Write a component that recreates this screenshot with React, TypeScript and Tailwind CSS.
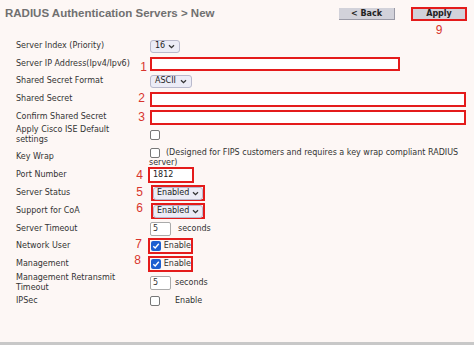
import React from "react";

function Chevron() {
  return (
    <svg width="7" height="5" viewBox="0 0 7 5" className="ml-auto shrink-0">
      <path d="M1 1.2 L3.5 3.7 L6 1.2" fill="none" stroke="#333" strokeWidth="1.3" />
    </svg>
  );
}

function Select({ value, width, tight = false }: { value: string; width: string; tight?: boolean }) {
  return (
    <div
      className={`flex items-center h-[13px] ${width} rounded-[3px] border border-[#b9b9cc] bg-[#ececf6] ${tight ? "pl-[3px] pr-[3px]" : "pl-[4px] pr-[4px]"} text-[8px] text-[#222]`}
    >
      <span>{value}</span>
      <Chevron />
    </div>
  );
}

function Box({ checked = false }: { checked?: boolean }) {
  if (checked) {
    return (
      <span className="flex items-center justify-center w-[10px] h-[10px] rounded-[2px] bg-[#1c5fd0]">
        <svg width="8" height="8" viewBox="0 0 8 8">
          <path d="M1.3 4.2 L3.2 6 L6.8 1.8" fill="none" stroke="#fff" strokeWidth="1.4" />
        </svg>
      </span>
    );
  }
  return <span className="block w-[10px] h-[10px] rounded-[2px] border border-[#777] bg-white" />;
}

// red annotation digits, laid over the form
function Mark({ n, className }: { n: string; className: string }) {
  return (
    <span
      className={`absolute w-[8px] text-right top-1/2 text-[12px] leading-none text-[#d8342c] font-['Liberation_Sans',sans-serif] ${className}`}
    >
      {n}
    </span>
  );
}

function Row({ label, h, children }: { label: React.ReactNode; h: string; children?: React.ReactNode }) {
  return (
    <div className={`flex items-center ${h}`}>
      <div className="w-[134px] shrink-0 leading-[10px]">{label}</div>
      <div className="relative flex items-center flex-1 h-full">{children}</div>
    </div>
  );
}

export default function App() {
  return (
    <div className="w-[474px] h-[345px] flex flex-col bg-[#fdf7f5] text-[8px] text-[#333] font-['DejaVu_Sans',sans-serif] overflow-hidden">
      <div className="flex items-start justify-between pl-[5px] pr-[7px] pt-[8px] h-[37px] shrink-0">
        <h1 className="text-[11.5px] font-bold text-[#707070] font-['Liberation_Sans',sans-serif] leading-none">
          RADIUS Authentication Servers &gt; New
        </h1>
        <div className="flex items-start gap-[16px] -mt-[1px]">
          <button className="mt-[1px] w-[56px] h-[12px] bg-[#d2d2da] border-b border-r border-[#9a9aa6] text-[8px] font-bold text-[#222] leading-none">
            &lt; Back
          </button>
          <div className="flex flex-col items-center">
            <button className="w-[56px] h-[14px] bg-[#d2d2da] border-2 border-[#e41b1b] text-[8px] font-bold text-[#222] leading-none">
              Apply
            </button>
            <span className="mt-[3px] text-[12px] leading-none text-[#d8342c] font-['Liberation_Sans',sans-serif]">9</span>
          </div>
        </div>
      </div>

      <div className="flex flex-col pl-[16px]">
        <Row label="Server Index (Priority)" h="h-[18px]">
          <Select value="16" width="w-[30px]" />
        </Row>
        <Row label="Server IP Address(Ipv4/Ipv6)" h="h-[17px]">
          <Mark n="1" className="-left-[11px] -translate-y-[3px]" />
          <div className="w-[250px] h-[14px] border-2 border-[#e41b1b] bg-white" />
        </Row>
        <Row label="Shared Secret Format" h="h-[18px]">
          <Select value="ASCII" width="w-[42px]" />
        </Row>
        <Row label="Shared Secret" h="h-[18px]">
          <Mark n="2" className="-left-[13px] -translate-y-[7px]" />
          <div className="w-[316px] h-[15px] border-2 border-[#e41b1b] bg-white" />
        </Row>
        <Row label="Confirm Shared Secret" h="h-[18px]">
          <Mark n="3" className="-left-[13px] -translate-y-[6px]" />
          <div className="w-[316px] h-[15px] border-2 border-[#e41b1b] bg-white" />
        </Row>
        <Row label={<>Apply Cisco ISE Default<br />settings</>} h="h-[18px]">
          <Box />
        </Row>
        <div className="flex h-[22px]">
          <div className="w-[134px] shrink-0 pt-[8px] leading-[10px]">Key Wrap</div>
          <div className="pt-[4px] leading-[10px]">
            <div className="flex items-center gap-[6px]">
              <Box />
              <span>(Designed for FIPS customers and requires a key wrap compliant RADIUS</span>
            </div>
            <div className="-ml-[1px]">server)</div>
          </div>
        </div>
        <Row label="Port Number" h="h-[18px]">
          <Mark n="4" className="-left-[15px] -translate-y-[6px]" />
          <div className="-ml-[2px] w-[46px] h-[16px] border-2 border-[#e41b1b] bg-white flex items-center pl-[3px] text-[#222]">
            1812
          </div>
        </Row>
        <Row label="Server Status" h="h-[18px]">
          <Mark n="5" className="-left-[15px] -translate-y-[7px]" />
          <div className="ml-[1px] w-[54px] h-[16px] border-2 border-[#e41b1b] flex items-center">
            <Select value="Enabled" width="w-full" tight />
          </div>
        </Row>
        <Row label="Support for CoA" h="h-[18px]">
          <Mark n="6" className="-left-[15px] -translate-y-[9px]" />
          <div className="ml-[1px] w-[54px] h-[16px] border-2 border-[#e41b1b] flex items-center">
            <Select value="Enabled" width="w-full" tight />
          </div>
        </Row>
        <Row label="Server Timeout" h="h-[17px]">
          <div className="w-[21px] h-[14px] border border-[#aaa] rounded-[2px] bg-white flex items-center pl-[2px]">5</div>
          <span className="ml-[7px]">seconds</span>
        </Row>
        <Row label="Network User" h="h-[18px]">
          <Mark n="7" className="-left-[16px] -translate-y-[8px]" />
          <div className="-ml-[2px] flex items-center gap-[3px] w-[45px] h-[16px] border-2 border-[#e41b1b] pl-[1px]">
            <Box checked />
            <span>Enable</span>
          </div>
        </Row>
        <Row label="Management" h="h-[18px]">
          <Mark n="8" className="-left-[17px] -translate-y-[10px]" />
          <div className="-ml-[2px] flex items-center gap-[3px] w-[45px] h-[16px] border-2 border-[#e41b1b] pl-[1px]">
            <Box checked />
            <span>Enable</span>
          </div>
        </Row>
        <Row label={<>Management Retransmit<br />Timeout</>} h="h-[19px]">
          <div className="w-[21px] h-[14px] border border-[#aaa] rounded-[2px] bg-white flex items-center pl-[2px]">5</div>
          <span className="ml-[4px]">seconds</span>
        </Row>
        <Row label="IPSec" h="h-[18px]">
          <Box />
          <span className="ml-[15px]">Enable</span>
        </Row>
      </div>

      <div className="mt-auto h-[3px] bg-[#c8c8c8] shrink-0" />
    </div>
  );
}
